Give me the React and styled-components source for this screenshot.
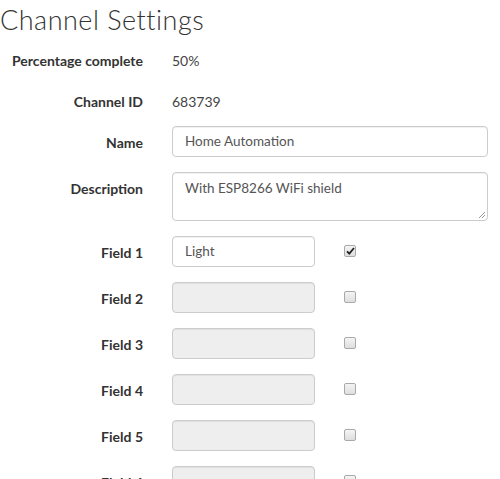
import React from "react";
import styled, { createGlobalStyle } from "styled-components";

const GlobalStyle = createGlobalStyle`
  html, body {
    margin: 0;
    padding: 0;
    background: #fff;
  }
  body {
    font-family: Lato, "Liberation Sans", sans-serif;
    font-size: 14px;
    color: #333;
  }
`;

const Page = styled.div`
  width: 500px;
  height: 479px;
  overflow: hidden;
`;

const Title = styled.h1`
  margin: 0;
  height: 44px;
  padding-top: 4px;
  box-sizing: border-box;
  font-family: Lato, "Liberation Sans", sans-serif;
  font-weight: 300;
  font-size: 27px;
  line-height: 32px;
  letter-spacing: 0.5px;
  color: #333;
`;

const Form = styled.div`
  display: grid;
  grid-template-columns: 143px 316px;
  column-gap: 29px;
  row-gap: 15px;
`;

const Label = styled.div`
  box-sizing: border-box;
  height: ${p => (p.$static ? "26px" : "auto")};
  text-align: right;
  font-weight: 700;
  font-size: 14px;
  line-height: 20px;
  padding-top: 7px;
  color: #333;
  white-space: nowrap;
`;

const Value = styled.div`
  height: 26px;
  padding-top: 7px;
  box-sizing: border-box;
  line-height: 20px;
  color: #444;
`;

const Input = styled.div`
  box-sizing: border-box;
  height: 31px;
  width: ${p => p.$width || "100%"};
  padding: 0 12px;
  line-height: 29px;
  border: 1px solid #ccc;
  border-radius: 4px;
  background: ${p => (p.$disabled ? "#eee" : "#fff")};
  box-shadow: inset 0 1px 1px rgba(0, 0, 0, 0.06);
  color: #555;
  font-size: 13.5px;
`;

const TextArea = styled(Input)`
  position: relative;
  height: 49px;
  line-height: 20px;
  padding-top: 5px;
`;

const Grip = styled.svg`
  position: absolute;
  right: 2px;
  bottom: 2px;
`;

const FieldRow = styled.div`
  display: flex;
  align-items: center;
  gap: 29px;
`;

const Check = styled.span`
  box-sizing: border-box;
  width: 12px;
  height: 12px;
  margin-top: -1px;
  border: 1px solid #a9a9a9;
  border-radius: 2px;
  background: linear-gradient(#f4f4f4, #dedede);
  display: flex;
  align-items: center;
  justify-content: center;
`;

const fields = [
  { name: "Field 1", value: "Light", on: true },
  { name: "Field 2" },
  { name: "Field 3" },
  { name: "Field 4" },
  { name: "Field 5" },
  { name: "Field 6" },
];

export default function App() {
  return (
    <Page>
      <GlobalStyle />
      <Title>Channel Settings</Title>
      <Form>
        <Label $static>Percentage complete</Label>
        <Value>50%</Value>

        <Label $static>Channel ID</Label>
        <Value>683739</Value>

        <Label>Name</Label>
        <Input>Home Automation</Input>

        <Label>Description</Label>
        <TextArea>
          With ESP8266 WiFi shield
          <Grip width="7" height="7" viewBox="0 0 7 7">
            <path d="M1 7L7 1M4 7L7 4" stroke="#999" strokeWidth="1" />
          </Grip>
        </TextArea>

        {fields.map(f => (
          <React.Fragment key={f.name}>
            <Label>{f.name}</Label>
            <FieldRow>
              <Input $width="143px" $disabled={!f.on}>
                {f.value}
              </Input>
              <Check>
                {f.on && (
                  <svg width="9" height="8" viewBox="0 0 9 8">
                    <path
                      d="M1 4.3L3.3 6.6L8 1"
                      fill="none"
                      stroke="#222"
                      strokeWidth="1.8"
                    />
                  </svg>
                )}
              </Check>
            </FieldRow>
          </React.Fragment>
        ))}
      </Form>
    </Page>
  );
}
